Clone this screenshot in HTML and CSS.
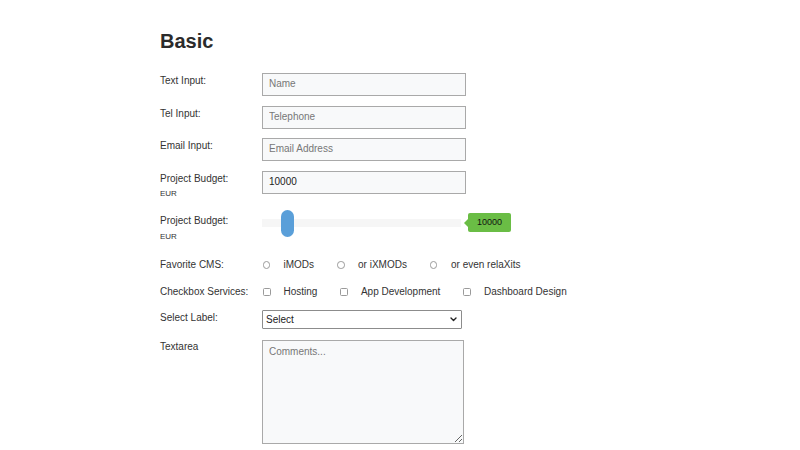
FILE: index.html
```html
<!DOCTYPE html>
<html lang="en">
<head>
<meta charset="utf-8">
<title>Basic</title>
<link rel="stylesheet" href="styles.css">
</head>
<body>
<main class="page">
  <h1 class="title">Basic</h1>
  <form class="form">
    <div class="row row-input">
      <label class="label" for="name">Text Input:</label>
      <input class="field" id="name" type="text" placeholder="Name">
    </div>
    <div class="row row-input">
      <label class="label" for="tel">Tel Input:</label>
      <input class="field" id="tel" type="tel" placeholder="Telephone">
    </div>
    <div class="row row-input">
      <label class="label" for="email">Email Input:</label>
      <input class="field" id="email" type="email" placeholder="Email Address">
    </div>
    <div class="row row-budget">
      <label class="label" for="budget">Project Budget:<span class="unit">EUR</span></label>
      <input class="field" id="budget" type="number" value="10000">
    </div>
    <div class="row row-slider">
      <label class="label" for="range">Project Budget:<span class="unit">EUR</span></label>
      <div class="slider">
        <input class="range" id="range" type="range" min="0" max="100000" step="1000" value="10000">
        <output class="bubble" for="range">10000</output>
      </div>
    </div>
    <div class="row row-choice">
      <span class="label">Favorite CMS:</span>
      <div class="options">
        <label class="option"><input class="radio" type="radio" name="cms">iMODs</label>
        <label class="option"><input class="radio" type="radio" name="cms">or iXMODs</label>
        <label class="option"><input class="radio" type="radio" name="cms">or even relaXits</label>
      </div>
    </div>
    <div class="row row-check">
      <span class="label">Checkbox Services:</span>
      <div class="options">
        <label class="option option-check"><input class="check" type="checkbox">Hosting</label>
        <label class="option option-check"><input class="check" type="checkbox">App Development</label>
        <label class="option option-check"><input class="check" type="checkbox">Dashboard Design</label>
      </div>
    </div>
    <div class="row row-select">
      <label class="label" for="sel">Select Label:</label>
      <span class="select-wrap">
        <select class="select" id="sel">
          <option>Select</option>
          <option>Option 1</option>
          <option>Option 2</option>
        </select>
        <svg class="chevron" width="7" height="5" viewBox="0 0 7 5" aria-hidden="true"><path d="M1 1 L3.5 3.5 L6 1" fill="none" stroke="#222" stroke-width="1.4" stroke-linecap="round" stroke-linejoin="round"/></svg>
      </span>
    </div>
    <div class="row row-area">
      <label class="label" for="comments">Textarea</label>
      <textarea class="area" id="comments" placeholder="Comments..."></textarea>
    </div>
  </form>
</main>
</body>
</html>
```
FILE: styles.css
```css
html, body {
  margin: 0;
  background: #ffffff;
}

body {
  font-family: "Liberation Sans", Arial, sans-serif;
  color: #333333;
}

.page {
  padding: 29px 0 0 160px;
}

.title {
  margin: 0 0 20px;
  font-size: 20px;
  line-height: 24px;
  font-weight: 700;
  color: #2b2b2b;
}

.form {
  margin: 0;
}

.row {
  display: flex;
  align-items: flex-start;
}

.label {
  flex: none;
  width: 102px;
  font-size: 10px;
  line-height: 12px;
  padding-top: 2px;
  color: #333333;
}

.unit {
  display: block;
  font-size: 8px;
  line-height: 10px;
  margin-top: 4.5px;
}

.field {
  box-sizing: border-box;
  width: 204px;
  height: 23px;
  margin: 0;
  padding: 0 6px 2px;
  border: 1px solid #a9a9a9;
  border-radius: 0;
  background: #f8f9fa;
  font: 10px "Liberation Sans", Arial, sans-serif;
  color: #222222;
  outline: none;
  -moz-appearance: textfield;
}

.field::-webkit-outer-spin-button,
.field::-webkit-inner-spin-button {
  -webkit-appearance: none;
  margin: 0;
}

.field::placeholder {
  color: #777777;
}

.row-input {
  margin-bottom: 9.67px;
}

.row-budget {
  margin-bottom: 8.5px;
}

/* slider */
.row-slider {
  margin-bottom: 15px;
}

.row-slider .label {
  padding-top: 7.5px;
}

.slider {
  display: flex;
  align-items: center;
  height: 27px;
  margin-top: 2px;
}

.range {
  -webkit-appearance: none;
  appearance: none;
  width: 199px;
  height: 27px;
  margin: 0;
  padding: 0;
  background: transparent;
  outline: none;
}

.range::-webkit-slider-runnable-track {
  height: 8px;
  background: #f6f6f6;
  border: none;
}

.range::-webkit-slider-thumb {
  -webkit-appearance: none;
  appearance: none;
  width: 13px;
  height: 27px;
  margin-top: -9.5px;
  border: none;
  border-radius: 6.5px;
  background: #5a9fd9;
}

.bubble {
  position: relative;
  box-sizing: border-box;
  width: 43px;
  height: 19px;
  margin-left: 7px;
  margin-top: -1px;
  border-radius: 2px;
  background: #6abd45;
  color: #111111;
  font-size: 9px;
  line-height: 19px;
  text-align: center;
}

.bubble::before {
  content: "";
  position: absolute;
  left: -4px;
  top: 5.5px;
  border-top: 4px solid transparent;
  border-bottom: 4px solid transparent;
  border-right: 4px solid #6abd45;
}

/* radios and checkboxes */
.row-choice {
  margin-bottom: 13px;
}

.row-check {
  margin-bottom: 12px;
}

.options {
  display: flex;
  padding-top: 2px;
  font-size: 10px;
  line-height: 12px;
  color: #333333;
}

.option {
  display: flex;
  align-items: center;
  margin-right: 22.5px;
}

.option-check {
  margin-right: 22px;
}

.radio,
.check {
  -webkit-appearance: none;
  appearance: none;
  box-sizing: border-box;
  flex: none;
  width: 7.5px;
  height: 7.5px;
  margin: 0 13.5px 0 0.5px;
  border: 1px solid #9a9a9a;
  background: #ffffff;
}

.radio {
  border-radius: 50%;
}

.check {
  border-radius: 1.5px;
  margin-left: 1px;
  margin-right: 13px;
}

/* select */
.row-select {
  margin-bottom: 11px;
}

.row-select .label {
  padding-top: 2.5px;
}

.select-wrap {
  position: relative;
  display: block;
  height: 19px;
}

.select {
  -webkit-appearance: none;
  appearance: none;
  box-sizing: border-box;
  display: block;
  width: 200px;
  height: 19px;
  margin: 0;
  padding: 0 4px 0 3px;
  border: 1px solid #8c8c8c;
  border-radius: 1px;
  background: #ffffff;
  font: 10px "Liberation Sans", Arial, sans-serif;
  color: #222222;
  outline: none;
}

.chevron {
  position: absolute;
  right: 5px;
  top: 7.5px;
  pointer-events: none;
}

/* textarea */
.row-area .label {
  padding-top: 1.5px;
}

.area {
  box-sizing: border-box;
  display: block;
  width: 202px;
  height: 104px;
  margin: 0;
  padding: 5px 6px;
  border: 1px solid #a9a9a9;
  border-radius: 0;
  background: #f8f9fa;
  font: 10px/12px "Liberation Sans", Arial, sans-serif;
  color: #222222;
  outline: none;
}

.area::placeholder {
  color: #777777;
}
```
